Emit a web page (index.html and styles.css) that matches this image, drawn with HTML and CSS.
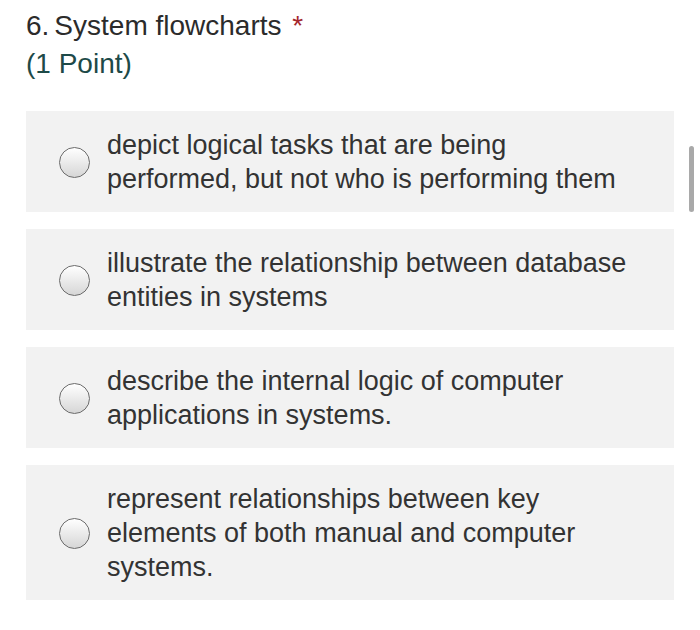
FILE: index.html
```html
<!DOCTYPE html>
<html>
<head>
<meta charset="utf-8">
<link rel="stylesheet" href="styles.css">
</head>
<body>
<div class="page">
  <div class="question">
    <div class="title"><span class="num">6.</span>System flowcharts <span class="req">*</span></div>
    <div class="points">(1 Point)</div>
  </div>
  <div class="options">
    <div class="option"><span class="radio"></span><span class="label">depict logical tasks that are being performed, but not who is performing them</span></div>
    <div class="option"><span class="radio"></span><span class="label">illustrate the relationship between database entities in systems</span></div>
    <div class="option"><span class="radio"></span><span class="label">describe the internal logic of computer applications in systems.</span></div>
    <div class="option"><span class="radio"></span><span class="label">represent relationships between key elements of both manual and computer systems.</span></div>
  </div>
</div>
<div class="scrollbar"></div>
</body>
</html>
```
FILE: styles.css
```css
html, body {
  margin: 0;
  padding: 0;
  background: #ffffff;
}
body {
  font-family: "Liberation Sans", Arial, sans-serif;
  color: #333333;
  width: 700px;
  height: 630px;
  overflow: hidden;
  position: relative;
}
.page {
  padding: 7px 26px 0 26px;
}
.question {
  font-size: 28px;
  line-height: 38px;
}
.title {
  color: #2b2b2b;
}
.num {
  margin-right: 5px;
}
.req {
  color: #a4262c;
  margin-left: 3px;
}
.points {
  color: #1d4a48;
}
.options {
  margin-top: 28px;
  display: flex;
  flex-direction: column;
  gap: 17px;
}
.option {
  background: #f2f2f2;
  display: flex;
  align-items: center;
  padding: 17px 34px 16px 33px;
  min-height: 68px;
}
.radio {
  flex: none;
  box-sizing: border-box;
  width: 31px;
  height: 31px;
  border-radius: 50%;
  border: 1.5px solid #6b6b6b;
  background: linear-gradient(#ffffff, #d6d6d6);
  margin-right: 17px;
}
.label {
  font-size: 27px;
  line-height: 34px;
  color: #333333;
}
.scrollbar {
  position: absolute;
  left: 689px;
  top: 146px;
  width: 5px;
  height: 66px;
  border-radius: 3px;
  background: #a9a9a9;
}
```
